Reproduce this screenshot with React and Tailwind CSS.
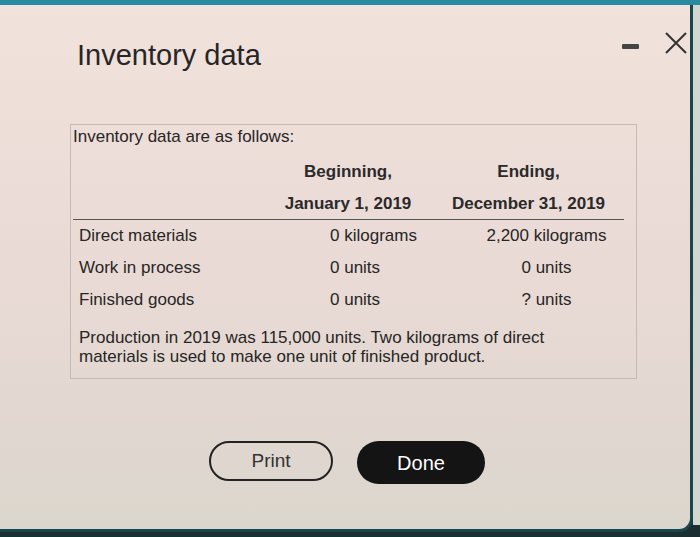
import React from "react";

export default function App() {
  const font = { fontFamily: '"Liberation Sans", Arial, sans-serif' };
  return (
    <div className="w-[700px] h-[537px] overflow-hidden bg-[#1b2f33] flex flex-col" style={font}>
      <div className="h-[5px] bg-[#2b8aa0] shrink-0" />
      <div className="flex flex-1">
        <div className="w-[693px] h-[527px] shrink-0 bg-gradient-to-b from-[#f2e2dc] via-[#eadad5] to-[#dbd6cd] border-r-[3px] border-b-[3px] border-[#17464d] rounded-br-[14px] flex flex-col text-[#222]">
          <div className="flex items-start justify-between pl-[77px] pr-[2px] pt-[33px] h-[67px]">
            <h1 className="text-[29px] leading-[34px] text-[#262626]">Inventory data</h1>
            <div className="flex items-center gap-[25px] -mt-[6px]">
              <div className="w-[17px] h-[5px] bg-[#444] rounded-[1px] mt-[6px]" />
              <svg width="24" height="22" viewBox="0 0 24 22" className="text-[#333]">
                <path d="M2 1 L22 21 M22 1 L2 21" stroke="currentColor" strokeWidth="2" fill="none" />
              </svg>
            </div>
          </div>
          <div className="ml-[70px] mt-[52px] w-[567px] border border-[#c4bbb5] pt-[2px] pb-[12px] px-[2px] text-[17px] text-[#262626]">
            <div className="leading-[20px]">Inventory data are as follows:</div>
            <div className="mt-[9px] w-[551px]">
              <div className="grid grid-cols-[208px_134px_209px] h-[32px] items-center font-semibold text-[#2a2a2a] whitespace-nowrap">
                <div />
                <div className="text-center">Beginning,</div>
                <div className="text-center pl-[18px]">Ending,</div>
              </div>
              <div className="grid grid-cols-[208px_134px_209px] h-[32px] items-center font-semibold text-[#2a2a2a] border-b border-[#555] whitespace-nowrap">
                <div />
                <div className="text-center">January 1, 2019</div>
                <div className="text-center pl-[18px]">December 31, 2019</div>
              </div>
              {[
                ["Direct materials", "0 kilograms", "2,200 kilograms"],
                ["Work in process", "0 units", "0 units"],
                ["Finished goods", "0 units", "? units"],
              ].map(([a, b, c]) => (
                <div key={a} className="grid grid-cols-[208px_134px_209px] h-[32px] items-center whitespace-nowrap">
                  <div className="pl-[6px]">{a}</div>
                  <div className="pl-[49px]">{b}</div>
                  <div className="text-center pl-[54px]">{c}</div>
                </div>
              ))}
            </div>
            <p className="mt-[12px] pl-[6px] leading-[19px] text-[17px] whitespace-nowrap">
              Production in 2019 was 115,000 units. Two kilograms of direct
              <br />
              materials is used to make one unit of finished product.
            </p>
          </div>
          <div className="mt-[62px] flex justify-center gap-[24px] pl-[4px]">
            <button className="w-[124px] h-[40px] rounded-full border-2 border-[#222] text-[19px] text-[#333] bg-transparent">
              Print
            </button>
            <button className="w-[128px] h-[43px] rounded-full bg-[#141414] text-[20px] text-white">
              Done
            </button>
          </div>
        </div>
        <div className="flex-1 h-[520px] bg-[#d3d5cf]" />
      </div>
    </div>
  );
}
